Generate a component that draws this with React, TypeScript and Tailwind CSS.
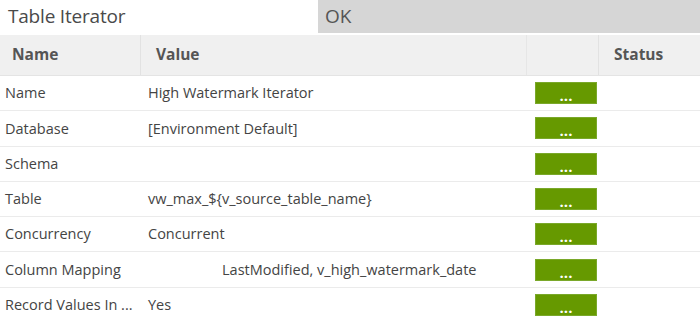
import React from 'react'

type Row = {
  name: string
  value: string
  indent?: boolean
}

const rows: Row[] = [
  { name: 'Name', value: 'High Watermark Iterator' },
  { name: 'Database', value: '[Environment Default]' },
  { name: 'Schema', value: '' },
  { name: 'Table', value: 'vw_max_${v_source_table_name}' },
  { name: 'Concurrency', value: 'Concurrent' },
  { name: 'Column Mapping', value: 'LastModified, v_high_watermark_date', indent: true },
  { name: 'Record Values In ...', value: 'Yes' },
]

const cols = 'grid grid-cols-[141px_386px_72px_1fr]'

export default function App() {
  return (
    <div className="w-[700px] h-[322px] overflow-hidden bg-white text-[#444] font-['Open_Sans',sans-serif]">
      {/* title bar */}
      <div className="flex h-[33px]">
        <div className="w-[318px] flex items-center pl-2 text-[19px] tracking-[-0.2px] text-[#4a4a4a]">Table Iterator</div>
        <div className="flex-1 flex items-center pl-[7px] bg-[#d6d6d6] text-[19px] text-[#555]">OK</div>
      </div>

      <div className="mt-[2px]">
        <div className={`${cols} h-[41px] bg-[#f0f0f0] border-b border-[#e4e4e4] text-[15.5px] font-bold text-[#555]`}>
          <div className="flex items-center pl-3 border-r border-[#e2e2e2]">Name</div>
          <div className="flex items-center pl-[15px] border-r border-[#e6e6e6]">Value</div>
          <div className="border-r border-[#e2e2e2]" />
          <div className="flex items-center pl-[15px]">Status</div>
        </div>

        {rows.map(r => (
          <div key={r.name} className={`${cols} h-[35.3px] border-b border-[#ebebeb] text-[14.5px]`}>
            <div className="flex items-center pl-[5px] whitespace-nowrap">{r.name}</div>
            <div className={`flex items-center whitespace-nowrap ${r.indent ? 'pl-[81px]' : 'pl-[7px]'}`}>{r.value}</div>
            <div className="flex items-center pl-[8px]">
              <button className="w-[62px] h-[22px] bg-[#669900] border border-[#7aa82a] flex items-end justify-center pb-0 text-white text-[15px] font-bold leading-none">
                ...
              </button>
            </div>
            <div />
          </div>
        ))}
      </div>
    </div>
  )
}
